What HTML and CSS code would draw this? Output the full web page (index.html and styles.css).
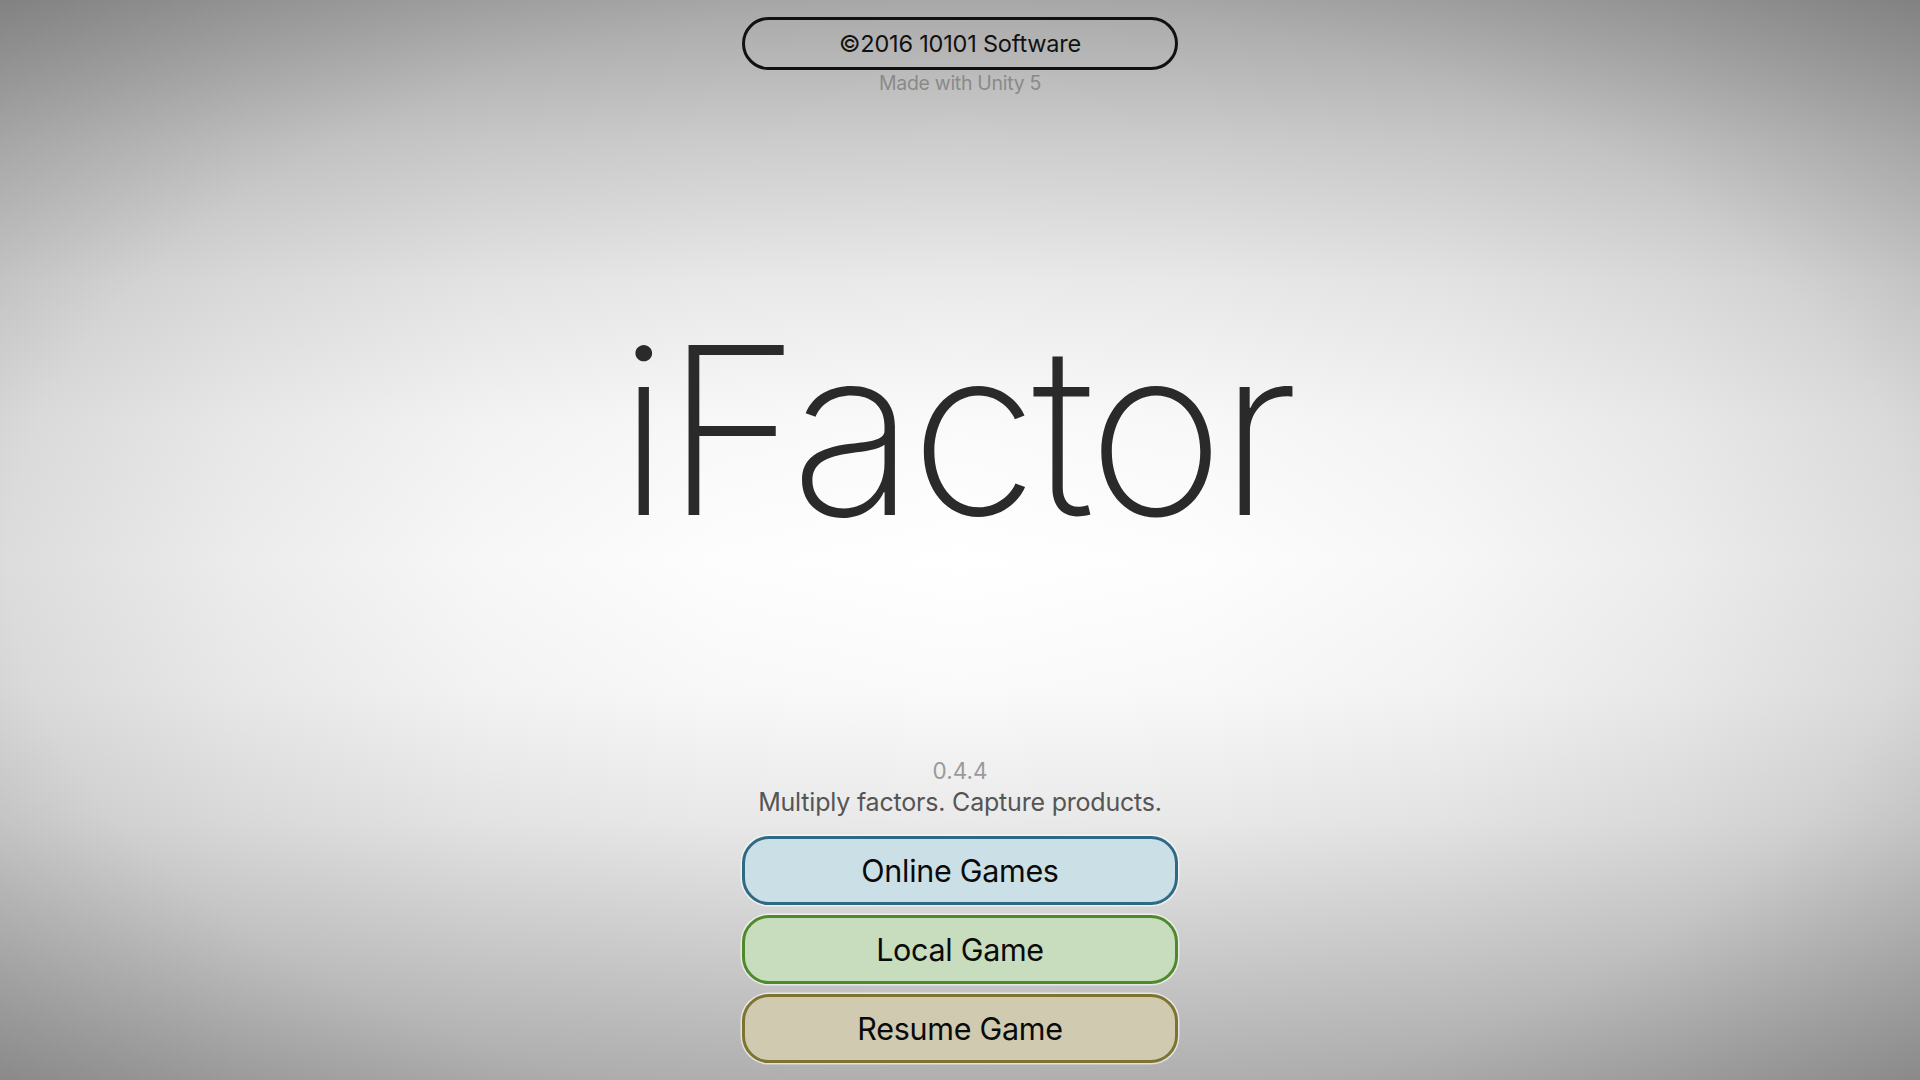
FILE: index.html
```html
<!DOCTYPE html>
<html lang="en">
<head>
<meta charset="utf-8">
<title>iFactor</title>
<link rel="stylesheet" href="styles.css">
</head>
<body>
<main class="screen">
  <header class="top">
    <div class="copyright">©2016 10101 Software</div>
    <div class="made">Made with Unity 5</div>
  </header>
  <h1 class="title">iFactor</h1>
  <footer class="bottom">
    <div class="version">0.4.4</div>
    <div class="tagline">Multiply factors. Capture products.</div>
    <div class="buttons">
      <button class="btn btn-online">Online Games</button>
      <button class="btn btn-local">Local Game</button>
      <button class="btn btn-resume">Resume Game</button>
    </div>
  </footer>
</main>
</body>
</html>
```

FILE: styles.css
```css
html, body {
  margin: 0;
  padding: 0;
  height: 100%;
}
body {
  font-family: Inter, "Liberation Sans", sans-serif;
  background-color: #ffffff;
  background-image:
    radial-gradient(ellipse farthest-corner at 50% 52%, #ffffff 70%, #e4e4e4 100%),
    linear-gradient(to bottom,
      #a8a8a8 0%, #cdcdcd 13%, #eaeaea 26%, #fafafa 39%, #ffffff 52%,
      #fafafa 64%, #eaeaea 76%, #cdcdcd 88%, #b0b0b0 100%),
    linear-gradient(to right,
      #dcdcdc 0%, #ececec 12.5%, #f7f7f7 25%, #fdfdfd 37.5%, #ffffff 50%,
      #fdfdfd 62.5%, #f7f7f7 75%, #ececec 87.5%, #dcdcdc 100%);
  background-blend-mode: multiply;
  overflow: hidden;
}
.screen {
  height: 100vh;
  display: flex;
  flex-direction: column;
  align-items: center;
}
.top {
  display: flex;
  flex-direction: column;
  align-items: center;
  margin-top: 17px;
}
.copyright {
  box-sizing: border-box;
  width: 436px;
  height: 53px;
  border: 3px solid #111;
  border-radius: 27px;
  display: flex;
  align-items: center;
  justify-content: center;
  font-size: 23.5px;
  color: #111;
  letter-spacing: -0.2px;
}
.made {
  margin-top: 1px;
  font-size: 19.5px;
  line-height: 24px;
  color: #8a8a8a;
  letter-spacing: -0.3px;
}
.title {
  margin: 218px 10px 0 0;
  font-size: 234px;
  line-height: 1;
  font-weight: 200;
  color: #2a2a2a;
  letter-spacing: -6px;
}
.bottom {
  margin-top: auto;
  margin-bottom: 17px;
  display: flex;
  flex-direction: column;
  align-items: center;
}
.version {
  font-size: 22.5px;
  line-height: 24px;
  color: #9a9a9a;
}
.tagline {
  margin-top: 4px;
  font-size: 25px;
  line-height: 30px;
  color: #555;
  letter-spacing: -0.2px;
}
.buttons {
  margin-top: 19px;
  display: flex;
  flex-direction: column;
  gap: 10px;
}
.btn {
  box-sizing: border-box;
  width: 436px;
  height: 69px;
  border-radius: 27px;
  border: 3px solid;
  font-family: Inter, "Liberation Sans", sans-serif;
  font-size: 30.5px;
  color: #0a0a0a;
  letter-spacing: -0.3px;
  box-shadow: 0 0 0 1.5px rgba(255,255,255,0.6);
  padding: 0;
}
.btn-online {
  background: #cadfe6;
  border-color: #2f6a84;
}
.btn-local {
  background: #c8dcbe;
  border-color: #4e8a2b;
}
.btn-resume {
  background: #cfcab0;
  border-color: #7c7430;
}
```
